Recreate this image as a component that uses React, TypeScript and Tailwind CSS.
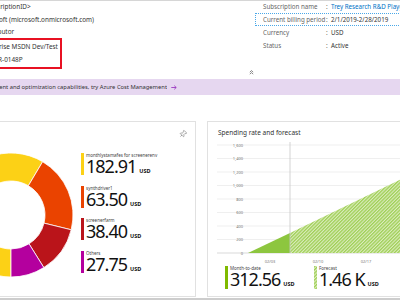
import { Pin } from "lucide-react";

const legend = [
  { label: "monthlystamafes for screenerenv", value: "182.91", color: "bg-[#fcd116]" },
  { label: "synthdriver1", value: "63.50", color: "bg-[#ea4300]" },
  { label: "screenerfarm", value: "38.40", color: "bg-[#ba141a]" },
  { label: "Others", value: "27.75", color: "bg-[#b4009e]" },
];

// angles are clockwise from 12 o'clock
const segments = [
  { from: 180, to: 390.7, fill: "#fcd116" },
  { from: 30.7, to: 103.8, fill: "#ea4300" },
  { from: 103.8, to: 148, fill: "#ba141a" },
  { from: 148, to: 180, fill: "#b4009e" },
];

const pt = (cx: number, cy: number, r: number, a: number) => {
  const rad = ((a - 90) * Math.PI) / 180;
  return [cx + r * Math.cos(rad), cy + r * Math.sin(rad)];
};

const arc = (cx: number, cy: number, R: number, r: number, a0: number, a1: number) => {
  const large = a1 - a0 > 180 ? 1 : 0;
  const [x0, y0] = pt(cx, cy, R, a0);
  const [x1, y1] = pt(cx, cy, R, a1);
  const [x2, y2] = pt(cx, cy, r, a1);
  const [x3, y3] = pt(cx, cy, r, a0);
  return `M${x0} ${y0} A${R} ${R} 0 ${large} 1 ${x1} ${y1} L${x2} ${y2} A${r} ${r} 0 ${large} 0 ${x3} ${y3}Z`;
};

const yLabels = ["1,600", "1,400", "1,200", "1,000", "800", "600", "400", "200", "0"];

const InfoRow = ({ label, value, blue }: { label: string; value: string; blue?: boolean }) => (
  <div className="flex h-[13px] items-center pl-[8px] whitespace-nowrap">
    <span className="w-[63px] text-[#666]">{label}</span>
    <span className="w-[5px] text-[#666]">:</span>
    <span className={blue ? "text-[#0072c6]" : "text-[#333]"}>{value}</span>
  </div>
);

const Hatch = ({ id }: { id: string }) => (
  <pattern id={id} width="2.4" height="2.4" patternUnits="userSpaceOnUse" patternTransform="rotate(45)">
    <rect width="2.4" height="2.4" fill="#dcedbf" />
    <rect width="1.3" height="2.4" fill="#9fcf55" />
  </pattern>
);

const App = () => {
  return (
    <div className="w-[400px] h-[300px] overflow-hidden bg-white font-['Noto_Sans',sans-serif] text-[#333]">
      <div className="h-px bg-[#d6d6d6]" />
      {/* subscription info */}
      <div className="flex h-[78px] flex-col text-[6.4px]">
        <div className="flex h-[65px]">
          <div className="-ml-[21px] w-[276px] shrink-0 whitespace-nowrap">
            <div className="h-[12px] leading-[12px]">&lt;SubscriptionID&gt;</div>
            <div className="h-[13px] leading-[13px]">Microsoft (microsoft.onmicrosoft.com)</div>
            <div className="h-[12px] leading-[12px]">Contributor</div>
            <div className="-ml-[6px] w-[89px] border-2 border-[#e81123] pb-px pl-[4px]">
              <div className="h-[13px] leading-[13px]">Enterprise MSDN Dev/Test</div>
              <div className="h-[13px] leading-[13px]">MS-AZR-0148P</div>
            </div>
          </div>
          <div className="-mt-px w-[170px] shrink-0 text-[6.2px]">
            <InfoRow label="Subscription name" value="Trey Research R&D Playground" blue />
            <div className="flex h-[13px] items-center border border-dotted border-[#4aa8e8] pl-[7px] whitespace-nowrap">
              <span className="w-[63px] text-[#666]">Current billing period</span>
              <span className="w-[5px] text-[#666]">:</span>
              <span>2/1/2019-2/28/2019</span>
            </div>
            <InfoRow label="Currency" value="USD" />
            <InfoRow label="Status" value="Active" />
          </div>
        </div>
        <div className="flex h-[13px] items-center pl-[249px]">
          <svg width="5" height="5" viewBox="0 0 5 5" fill="none" stroke="#555" strokeWidth="0.7">
            <path d="M0.8 2.2 L2.5 0.6 L4.2 2.2" />
            <path d="M0.8 4.2 L2.5 2.6 L4.2 4.2" />
          </svg>
        </div>
      </div>

      {/* banner */}
      <div className="flex h-[16px] items-center bg-[#e6d7f0] text-[5.8px] text-[#333]">
        <div className="flex w-[167px] shrink-0 justify-end overflow-hidden whitespace-nowrap">
          <span className="shrink-0">
            For additional cost management and optimization capabilities, try Azure Cost Management
          </span>
        </div>
        <svg className="ml-[4px]" width="6" height="5" viewBox="0 0 6 5" fill="none" stroke="#9b3bc1" strokeWidth="0.9">
          <path d="M0.3 2.5 H5.2 M3.3 0.7 L5.2 2.5 L3.3 4.3" />
        </svg>
      </div>

      {/* cards */}
      <div className="mt-[26px] flex h-[176px] gap-[11px]">
        <div className="-ml-[20px] flex w-[216px] shrink-0 flex-col border border-[#e1e1e1]">
          <div className="flex h-[31px] items-start justify-end pt-[8px] pr-[8px]">
            <Pin size={8} strokeWidth={1.4} className="rotate-45 text-[#555]" />
          </div>
          <div className="flex">
            <svg width="100" height="124" className="shrink-0">
              {segments.map((s) => (
                <path key={s.fill} d={arc(30, 62, 62, 34, s.from, s.to)} fill={s.fill} stroke="#fff" strokeWidth="0.8" />
              ))}
            </svg>
            <div className="flex flex-col gap-[10.5px]">
              {legend.map((l) => (
                <div key={l.label} className="flex h-[22px]">
                  <div className={`w-[3px] ${l.color}`} />
                  <div className="flex flex-col pl-[2px]">
                    <div className="text-[4.5px] leading-[5px] text-[#444] whitespace-nowrap">{l.label}</div>
                    <div className="flex items-baseline leading-[17px] text-[#111]">
                      <span className="text-[18px] tracking-[-1px]">{l.value}</span>
                      <span className="ml-[3px] text-[5.5px] font-bold">USD</span>
                    </div>
                  </div>
                </div>
              ))}
            </div>
          </div>
        </div>

        <div className="flex w-[200px] shrink-0 flex-col border border-[#e1e1e1]">
          <div className="flex h-[21px] items-center pl-[10px] text-[6.5px] text-[#333]">Spending rate and forecast</div>
          <svg width="200" height="122" className="shrink-0 overflow-visible">
            <defs>
              <Hatch id="hatch" />
            </defs>
            {yLabels.map((t, i) => (
              <g key={t}>
                <line x1="9" x2="200" y1={2 + i * 13.5} y2={2 + i * 13.5} stroke={i === 8 ? "#c8c8c8" : "#e8e8e8"} strokeWidth="0.7" />
                <text x="35" y={3.5 + i * 13.5} textAnchor="end" fontSize="4" fill="#777">
                  {t}
                </text>
              </g>
            ))}
            <polygon points="82,90 200,33 200,110 82,110" fill="url(#hatch)" />
            <polygon points="40,110 82,90 82,110" fill="#8dc63f" />
            <line x1="82" x2="82" y1="-1" y2="110" stroke="#c8c8c8" strokeWidth="0.8" />
            {[
              ["02/03", 62],
              ["02/10", 110],
              ["02/17", 158],
            ].map(([t, x]) => (
              <text key={t} x={x} y="119.5" textAnchor="middle" fontSize="4" fill="#777">
                {t}
              </text>
            ))}
          </svg>
          <div className="mt-px flex pl-[17px] text-[#111]">
            <div className="flex w-[89px] shrink-0">
              <div className="h-[23px] w-[3px] bg-[#7fba00]" />
              <div className="flex flex-col pl-[2px]">
                <div className="text-[4.5px] leading-[5px] text-[#444]">Month-to-date</div>
                <div className="flex items-baseline leading-[17px]">
                  <span className="text-[18px] tracking-[-1px]">312.56</span>
                  <span className="ml-[3px] text-[5.5px] font-bold">USD</span>
                </div>
              </div>
            </div>
            <div className="flex">
              <svg width="3" height="23" className="shrink-0">
                <defs>
                  <Hatch id="hatch2" />
                </defs>
                <rect width="3" height="23" fill="url(#hatch2)" />
              </svg>
              <div className="flex flex-col pl-[2px]">
                <div className="text-[4.5px] leading-[5px] text-[#444]">Forecast</div>
                <div className="flex items-baseline leading-[17px]">
                  <span className="text-[18px] tracking-[-1px]">1.46 K</span>
                  <span className="ml-[3px] text-[5.5px] font-bold">USD</span>
                </div>
              </div>
            </div>
          </div>
        </div>
      </div>
      <div className="mt-px h-[3px] bg-[#cdcdcd]" />
    </div>
  );
};

export default App;
